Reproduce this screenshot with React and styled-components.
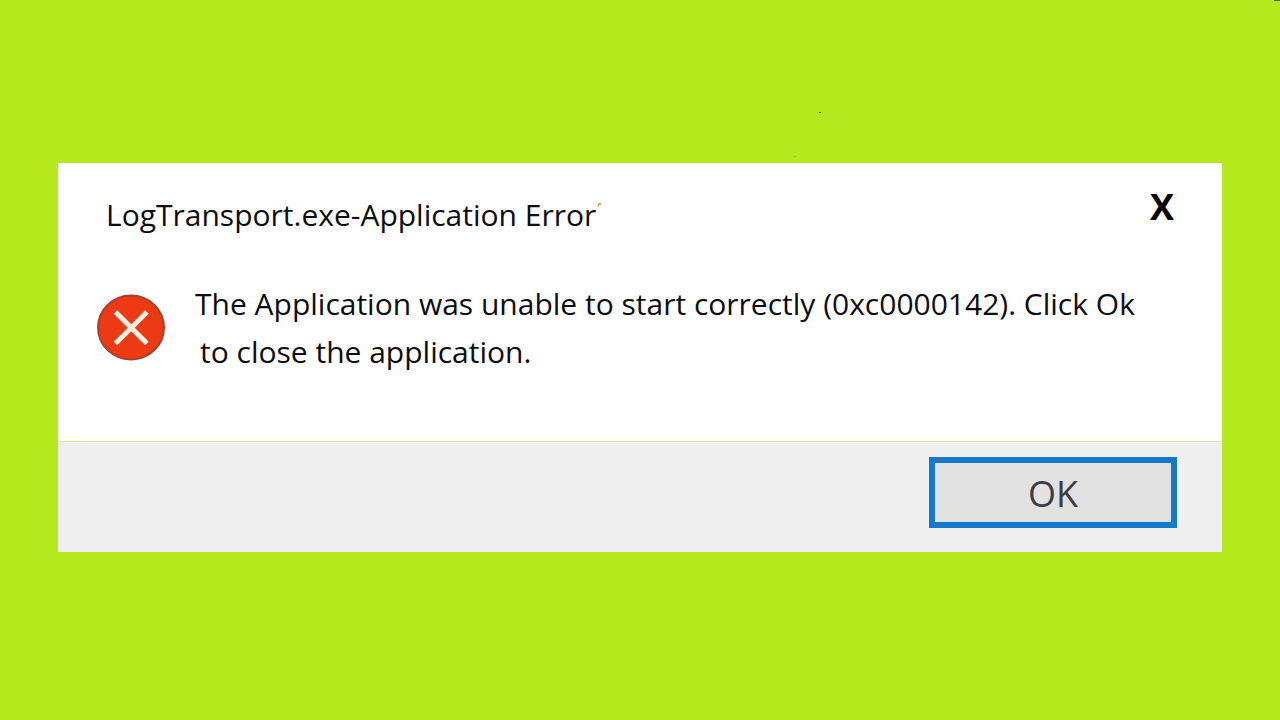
import React from "react";
import styled, { createGlobalStyle } from "styled-components";

const GlobalStyle = createGlobalStyle`
  *, *::before, *::after { box-sizing: border-box; }
  body {
    margin: 0;
    background: #b5e81d;
    color: #0c0c12;
    font-family: "Open Sans", "Noto Sans", sans-serif;
  }
`;

const Page = styled.main`
  position: relative;
  min-height: 100vh;
  padding: 163px 58px;
`;

const Speck = styled.span`
  position: absolute;
  top: ${(p) => p.$top}px;
  left: ${(p) => p.$left}px;
  width: 2px;
  height: 1px;
  background: ${(p) => p.$color};
`;

const CornerMark = styled.span`
  position: absolute;
  width: 6px;
  height: 1px;
  top: 0;
  right: 0;
  background: #4d6a12;
`;

const Dialog = styled.section`
  display: flex;
  flex-direction: column;
  background: #ffffff;
`;

const TitleBar = styled.header`
  display: flex;
  align-items: flex-start;
  justify-content: space-between;
  padding: 24px 40px 0 48px;
`;

const Title = styled.h1`
  display: flex;
  align-items: flex-start;
  gap: 2px;
  margin: 4px 0 0;
  font-size: 30px;
  font-weight: 400;
  line-height: 48px;
`;

const Tick = styled.svg`
  width: 3px;
  height: 4px;
  margin-top: 12px;
`;

const CloseButton = styled.button`
  width: 40px;
  height: 40px;
  padding: 0;
  border: 0;
  background: transparent;
  color: #000000;
  font-family: inherit;
  font-size: 36px;
  font-weight: 700;
  line-height: 40px;
`;

const Body = styled.div`
  display: flex;
  align-items: flex-start;
  gap: 29px;
  padding: 41px 40px 65px 39px;
`;

const ErrorIcon = styled.svg`
  flex: none;
  width: 69px;
  height: 67px;
  margin-top: 14px;
`;

const Message = styled.p`
  margin: 0;
  font-size: 30px;
  line-height: 48px;
`;

const Line = styled.span`
  display: block;
  padding-left: ${(p) => (p.$indent ? 5 : 0)}px;
`;

const Footer = styled.footer`
  display: flex;
  justify-content: flex-end;
  padding: 15px 45px 24px;
  border-top: 1px solid #d3ec8c;
  background: #efefef;
`;

const OkButton = styled.button`
  width: 248px;
  height: 71px;
  padding: 2px 0 0;
  border: 6px solid #1478cb;
  background: #e1e1e1;
  color: #3c3c44;
  font-family: inherit;
  font-size: 36px;
  line-height: 56px;
`;

export default function App() {
  return (
    <>
      <GlobalStyle />
      <Page>
        <CornerMark />
        <Speck $top={112} $left={819} $color="#3f6420" />
        <Speck $top={156} $left={794} $color="#93b83a" />
        <Dialog role="alertdialog" aria-labelledby="dialog-title" aria-describedby="dialog-message">
          <TitleBar>
            <Title id="dialog-title">
              LogTransport.exe-Application Error
              <Tick viewBox="0 0 3 4" aria-hidden="true">
                <path d="M0 0H3V2H1V4H0Z" fill="#e0a868" />
              </Tick>
            </Title>
            <CloseButton type="button" aria-label="Close">X</CloseButton>
          </TitleBar>
          <Body>
            <ErrorIcon viewBox="0 0 69 67" aria-hidden="true">
              <ellipse cx="34" cy="33.5" rx="33" ry="32" fill="#ee3a13" stroke="#a8402c" strokeWidth="2" />
              <path d="M18.5 18L50 49.5M50 18L18.5 49.5" stroke="#fff1e6" strokeWidth="5" />
            </ErrorIcon>
            <Message id="dialog-message">
              <Line>The Application was unable to start correctly (0xc0000142). Click Ok</Line>
              <Line $indent>to close the application.</Line>
            </Message>
          </Body>
          <Footer>
            <OkButton type="button">OK</OkButton>
          </Footer>
        </Dialog>
      </Page>
    </>
  );
}
